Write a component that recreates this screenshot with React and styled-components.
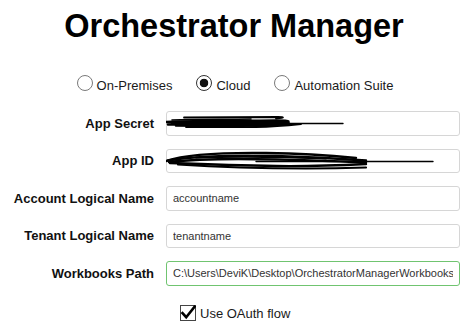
import styled, { createGlobalStyle } from 'styled-components'

const GlobalStyle = createGlobalStyle`
  html, body {
    margin: 0;
    padding: 0;
    background: #fff;
  }
  body {
    font-family: "Liberation Sans", Arial, sans-serif;
    color: #000;
  }
`

const FIELDS = [
  { label: 'App Secret', value: '', scribble: 'secret' },
  { label: 'App ID', value: '', scribble: 'id' },
  { label: 'Account Logical Name', value: 'accountname' },
  { label: 'Tenant Logical Name', value: 'tenantname' },
  { label: 'Workbooks Path', value: 'C:\\Users\\DeviK\\Desktop\\OrchestratorManagerWorkbooks', focused: true },
]

const MODES = ['On-Premises', 'Cloud', 'Automation Suite']

// redaction marks scribbled over the two secret fields
const SecretScribble = () => (
  <ScribbleSvg width="180" height="16" viewBox="0 0 180 16">
    <path d="M18 2.5 L112 2 C118 2 120 3 110 3.5" strokeWidth="1.8" />
    <path d="M0 7 C30 5.5 70 6 110 5.5 C125 5.5 128 7 110 7.5 C80 8 40 7.5 6 8" strokeWidth="2.6" />
    <path d="M2 9.5 C40 8 80 8.5 118 8 C130 8 120 10 95 10.5 C70 11 40 11 10 10.5" strokeWidth="2.6" />
    <path d="M20 12 C50 12 70 12.5 90 12 C110 11.5 125 10 135 9" strokeWidth="1.8" />
    <path d="M6 5 C30 4 60 4.5 85 4" strokeWidth="1.6" />
    <path d="M60 8.5 L177 8.5" strokeWidth="1.4" />
  </ScribbleSvg>
)

const IdScribble = () => (
  <ScribbleSvg width="270" height="20" viewBox="0 0 270 20">
    <path d="M0 10 C20 3 60 1.5 100 2 C140 2.5 170 5 190 7" strokeWidth="2.4" />
    <path d="M2 9.5 C30 5 70 4 110 5 C150 6 180 8 200 9.5" strokeWidth="2.4" />
    <path d="M3 11 C30 8 70 7.5 110 8.5 C150 9.5 180 10.5 200 11.5" strokeWidth="2.4" />
    <path d="M4 12 C30 13 70 14.5 110 15 C150 15.5 180 14 200 13" strokeWidth="2.4" />
    <path d="M12 13.5 C50 16 100 17.5 140 17.5 C165 17.5 185 17 200 16.5" strokeWidth="2.2" />
    <path d="M30 6.5 C70 5.5 120 6 160 7.5" strokeWidth="1.8" />
    <path d="M90 10.5 L267 10.5" strokeWidth="1.4" />
  </ScribbleSvg>
)

const CheckMark = () => (
  <CheckSvg width="16" height="16" viewBox="0 0 16 16">
    <path d="M2.5 8 L6.2 12.2 L14.5 1.8" />
  </CheckSvg>
)

export default function App() {
  return (
    <>
      <GlobalStyle />
      <Page>
        <Title>Orchestrator Manager</Title>
        <ModeGroup>
          {MODES.map((mode) => (
            <ModeOption key={mode}>
              <Radio type="radio" name="mode" defaultChecked={mode === 'Cloud'} />
              {mode}
            </ModeOption>
          ))}
        </ModeGroup>
        <Form>
          {FIELDS.map((field) => (
            <Row key={field.label}>
              <Label>{field.label}</Label>
              <InputWrap>
                <TextInput defaultValue={field.value} $focused={field.focused} readOnly />
                {field.scribble === 'secret' && <SecretScribble />}
                {field.scribble === 'id' && <IdScribble />}
              </InputWrap>
            </Row>
          ))}
        </Form>
        <CheckRow>
          <CheckBox>
            <CheckMark />
          </CheckBox>
          Use OAuth flow
        </CheckRow>
      </Page>
    </>
  )
}

const Page = styled.div`
  width: 474px;
  height: 335px;
  padding-top: 8px;
  box-sizing: border-box;
  overflow: hidden;
`

const Title = styled.h1`
  margin: 0;
  padding-right: 6px;
  font-size: 32.5px;
  line-height: 37px;
  font-weight: bold;
  text-align: center;
`

const ModeGroup = styled.div`
  display: flex;
  justify-content: center;
  gap: 24px;
  margin-top: 31px;
  padding-right: 4px;
  height: 16px;
`

const ModeOption = styled.label`
  display: flex;
  align-items: center;
  gap: 4px;
  font-size: 13px;
  line-height: 16px;
  color: #1a1a1a;
  padding-top: 4px;
`

const Radio = styled.input`
  appearance: none;
  margin: 0;
  width: 16px;
  height: 16px;
  border: 1px solid #7a7a7a;
  border-radius: 50%;
  background: #fff;
  box-sizing: border-box;
  position: relative;
  top: -3px;

  &:checked {
    border-color: #333;
    background: radial-gradient(circle, #111 0 4px, #fff 4.6px);
  }
`

const Form = styled.div`
  display: grid;
  row-gap: 13px;
  margin-top: 19px;
`

const Row = styled.div`
  display: grid;
  grid-template-columns: 154px 294px;
  column-gap: 12px;
  align-items: center;
`

const Label = styled.span`
  text-align: right;
  font-size: 13px;
  font-weight: bold;
  color: #111;
  white-space: nowrap;
`

const InputWrap = styled.div`
  position: relative;
`

const TextInput = styled.input`
  display: block;
  width: 100%;
  height: 24.5px;
  box-sizing: border-box;
  margin: 0;
  padding: 0 6px;
  border: 1px solid ${({ $focused }) => ($focused ? '#70c470' : '#d6d6d6')};
  border-radius: 3px;
  font-family: "Liberation Sans", Arial, sans-serif;
  font-size: 11px;
  color: #333;
  outline: none;
  background: #fff;
`

const ScribbleSvg = styled.svg`
  position: absolute;
  left: 0;
  top: 50%;
  transform: translateY(-50%);
  pointer-events: none;

  path {
    fill: none;
    stroke: #000;
    stroke-linecap: round;
  }
`

const CheckRow = styled.label`
  display: flex;
  align-items: center;
  gap: 4px;
  margin: 19.5px 0 0 180px;
  font-size: 13px;
  color: #1a1a1a;
`

const CheckBox = styled.span`
  display: inline-block;
  width: 16px;
  height: 16px;
  box-sizing: border-box;
  border: 1px solid #444;
  background: #fff;
  position: relative;
`

const CheckSvg = styled.svg`
  position: absolute;
  left: -1px;
  top: -1px;

  path {
    fill: none;
    stroke: #000;
    stroke-width: 2.6;
    stroke-linecap: square;
  }
`
